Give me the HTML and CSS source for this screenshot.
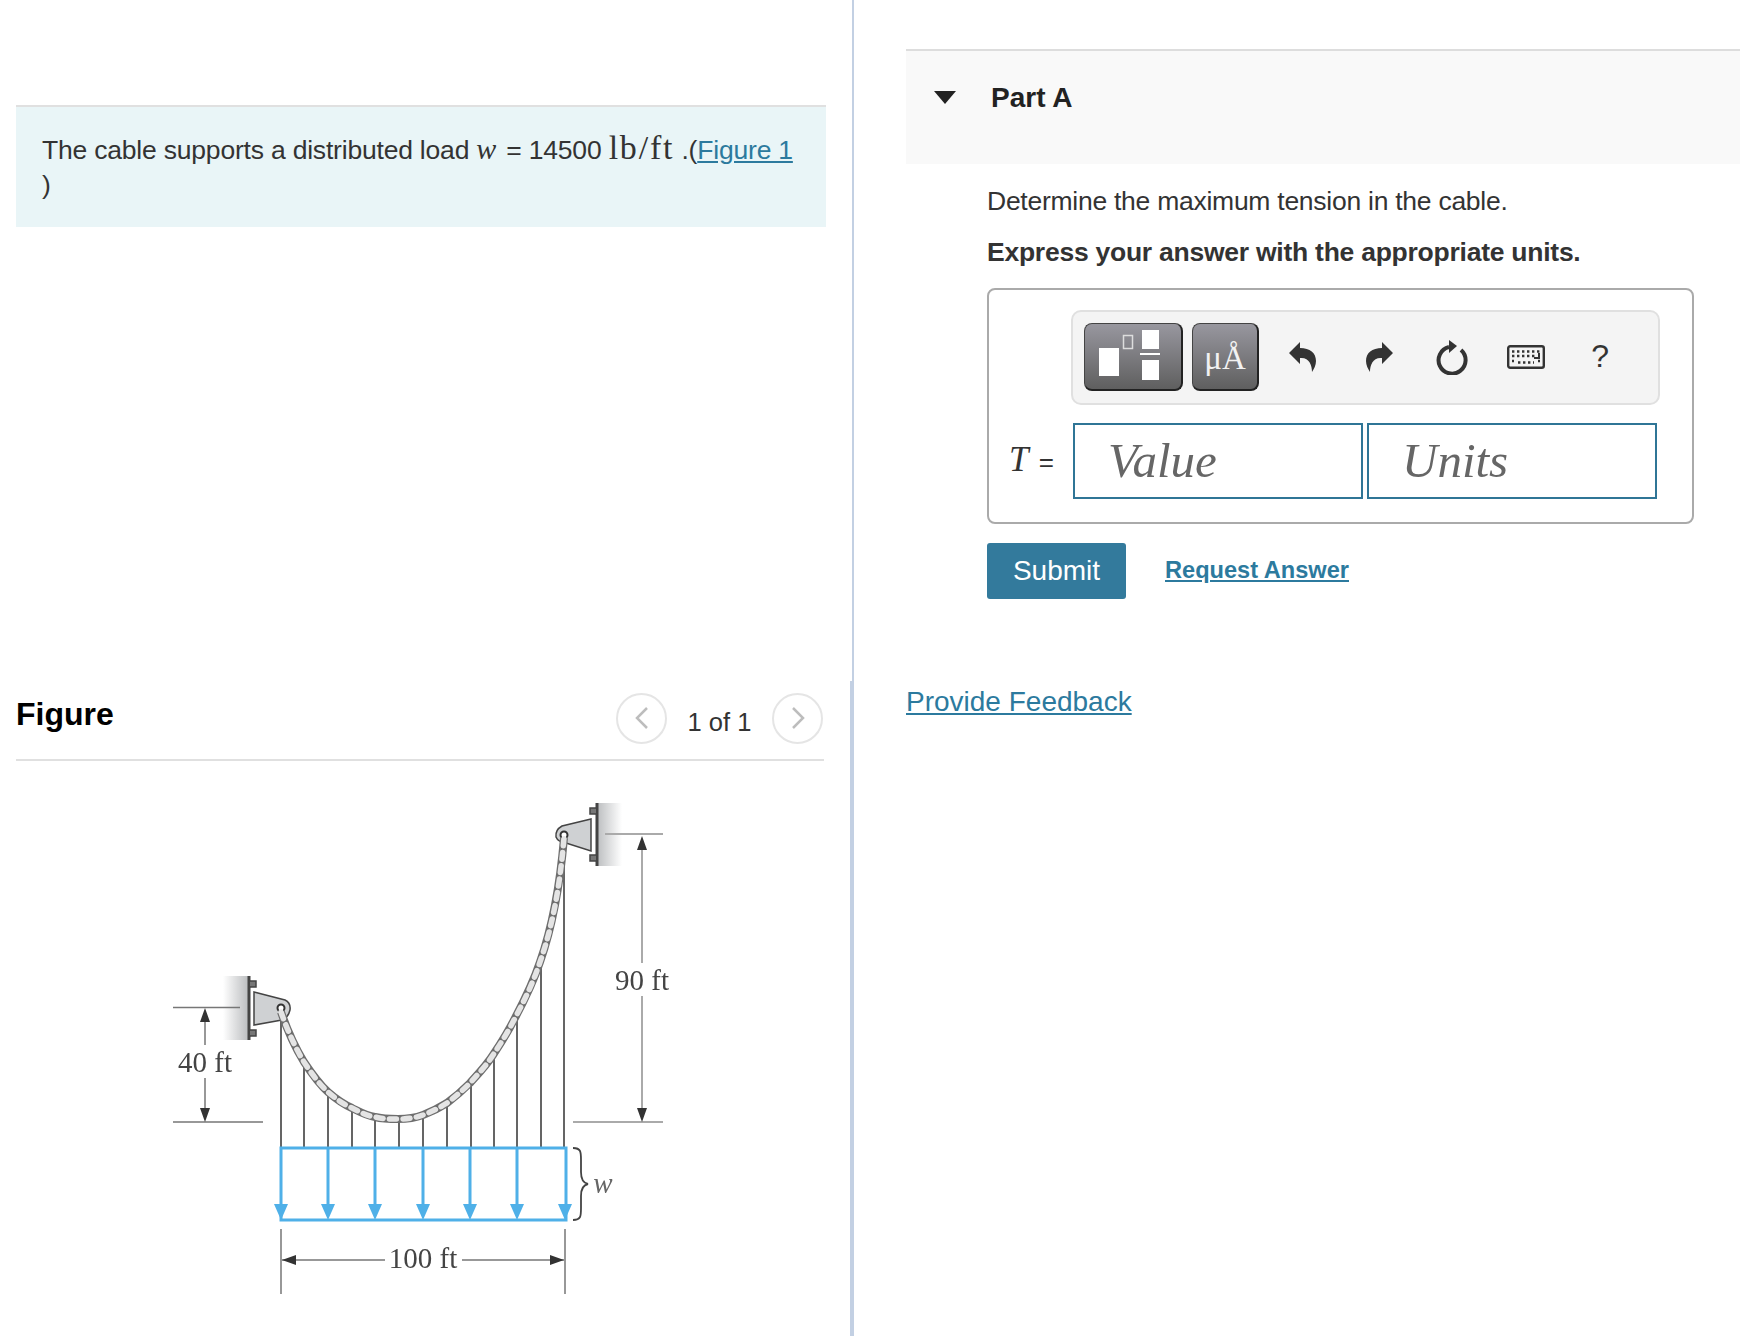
FILE: index.html
```html
<!DOCTYPE html>
<html lang="en">
<head>
<meta charset="utf-8">
<title>Part A</title>
<link rel="stylesheet" href="styles.css">
</head>
<body>
<div class="page">
  <section class="left">
    <div class="left-top">
      <div class="intro">The cable supports a distributed load <i class="math">w</i> = 14500 <span class="unit">lb/ft</span> .(<a href="#">Figure 1</a><br>)</div>
    </div>
    <div class="left-bottom">
      <div class="fig-head">
        <h2>Figure</h2>
        <div class="pager">
          <span class="circle"><svg width="16" height="24" viewBox="0 0 16 24"><path class="chev" d="M13 2 3 12l10 10"/></svg></span>
          <span class="count">1 of 1</span>
          <span class="circle"><svg width="16" height="24" viewBox="0 0 16 24"><path class="chev" d="m3 2 10 10L3 22"/></svg></span>
        </div>
      </div>
      <svg class="figure" width="810" height="575" viewBox="16 761 810 575">
        <defs>
          <linearGradient id="wl" x1="0" x2="1" y1="0" y2="0"><stop offset="0" stop-color="#fff"/><stop offset="1" stop-color="#bcbec0"/></linearGradient>
          <linearGradient id="wr" x1="0" x2="1" y1="0" y2="0"><stop offset="0" stop-color="#bcbec0"/><stop offset="1" stop-color="#fff"/></linearGradient>
          <path id="cable" d="M281 1012C288 1032 296 1049 304 1062 312 1074 319 1084 328 1092 336 1099 343 1104 352 1108 360 1112 367 1116 375 1117 383 1119 390 1119 398 1119 407 1119 415 1118 423 1115 431 1112 439 1108 447 1103 455 1097 462 1091 470 1083 478 1074 486 1066 493 1055 501 1043 508 1032 515 1018 525 999 533 983 540 962 553 925 560 885 564 838"/>
        </defs>
        <rect x="223" y="976" width="25" height="64" fill="url(#wl)"/>
        <rect x="597" y="803" width="25" height="63" fill="url(#wr)"/>
        <g class="hang">
          <path d="M281 1012V1148M304 1062V1148M328 1092V1148M352 1108V1148M375 1117V1148M399 1119V1148M423 1115V1148M447 1103V1148M471 1083V1148M494 1055V1148M517 1018V1148M541 962V1148M564 838V1148"/>
        </g>
        <path class="bracket" d="M254 992 285 1000Q291 1003 290 1010 288 1018 282 1020L254 1025Z"/>
        <path class="bracket" d="M591 819 562 826Q555 830 556 837 558 842 566 843L591 851Z"/>
        <path class="plate" d="M249 976V1040M597 803V866"/>
        <path class="tabs" d="M250 981H256V987H250M250 1030H256V1036H250M596 808H590V814H596M596 855H590V861H596"/>
        <circle class="eye" cx="281" cy="1008" r="3.500"/>
        <circle class="eye" cx="564" cy="835" r="3.500"/>
        <use class="r1" href="#cable"/>
        <use class="r2" href="#cable"/>
        <g class="dim">
          <path d="M173 1007.500H240M173 1122H263M205 1022V1045M205 1078V1108"/>
          <path d="M282 1260H385M462 1260H564M281 1229V1294M565 1229V1294"/>
        </g>
        <g class="dim light">
          <path d="M605 834H663M573 1122H663M642 848V963M642 996V1108"/>
        </g>
        <path class="head" d="M205 1008 210 1022H200ZM205 1122 200 1108H210ZM282 1260 296 1255V1265ZM564 1260 550 1255V1265ZM642 836 647 850H637ZM642 1122 637 1108H647Z"/>
        <g class="load">
          <path d="M281 1148H566V1220H281ZM328 1148V1210M375 1148V1210M423 1148V1210M470 1148V1210M517 1148V1210"/>
        </g>
        <path class="load-head" d="M274 1204H288L281 1220ZM321 1204H335L328 1220ZM368 1204H382L375 1220ZM416 1204H430L423 1220ZM463 1204H477L470 1220ZM510 1204H524L517 1220ZM558 1204H572L565 1220Z"/>
        <path class="brace" d="M573 1148C581 1148 581 1152 581 1160V1172C581 1178 583 1183 588 1184C583 1185 581 1190 581 1196V1208C581 1216 581 1220 573 1220"/>
        <text class="ft" x="205" y="1072">40 ft</text>
        <text class="ft" x="642" y="990">90 ft</text>
        <text class="ft" x="423" y="1268">100 ft</text>
        <text class="ft w" x="603" y="1193">w</text>
      </svg>
    </div>
  </section>
  <section class="right">
    <header class="part-head">
      <svg class="caret" width="22" height="13" viewBox="0 0 22 13"><path d="M0 0H22L11 13Z"/></svg>
      <h1>Part A</h1>
    </header>
    <div class="part-body">
      <p class="q">Determine the maximum tension in the cable.</p>
      <p class="q strong">Express your answer with the appropriate units.</p>
      <div class="answer">
        <div class="toolbar">
          <span class="tbtn wide">
            <svg width="99" height="68" viewBox="0 0 99 68">
              <path class="wh" d="M15 26H35V54H15ZM58 8H75V27H58ZM56 31H76V33H56ZM58 38H75V58H58Z"/>
              <rect class="wo" x="39.500" y="13.500" width="9" height="13"/>
            </svg>
          </span>
          <span class="tbtn unitbtn"><span class="mu">μ</span>Å</span>
          <span class="tool first">
            <svg width="28" height="32" viewBox="0 0 28 32"><path class="ico" d="M0 12 11 1V7C21 7 27 12 27 20 27 24 25 28 23 31 23 24 20 16 11 17V23Z"/></svg>
          </span>
          <span class="tool redo">
            <svg width="28" height="32" viewBox="0 0 28 32"><path class="ico" d="M27 12 16 1V7C6 7 0 12 0 20 0 24 2 28 4 31 4 24 7 16 16 17V23Z"/></svg>
          </span>
          <span class="tool reload">
            <svg width="34" height="36" viewBox="0 0 34 36"><path class="ring" d="M15 8A13.500 13.500 0 1 0 27 11"/><path class="ico" d="M15 1 23 7 15 14Z"/></svg>
          </span>
          <span class="tool">
            <svg width="38" height="24" viewBox="0 0 38 24">
              <rect class="kb" x="1.200" y="1.200" width="35.600" height="21.600" rx="2"/>
              <path class="keys" d="M5 6.500H33M5 11H28M5 16H7M11 17.500H27M31 16H33"/>
              <path class="kb-l" d="M32 8V13H27"/>
            </svg>
          </span>
          <span class="tool help">?</span>
        </div>
        <div class="entry">
          <span class="var"><i>T</i><span class="eq"> =</span></span>
          <span class="field">Value</span>
          <span class="field">Units</span>
        </div>
      </div>
      <div class="actions">
        <button class="submit" type="button">Submit</button>
        <a class="req" href="#">Request Answer</a>
      </div>
    </div>
    <a class="feedback" href="#">Provide Feedback</a>
  </section>
</div>
</body>
</html>
```

FILE: styles.css
```css
* { box-sizing: border-box; }
html, body { margin: 0; height: 100%; background: #fff; }
body { font-family: "Liberation Sans", Arial, sans-serif; color: #333; overflow: hidden; }
a { color: #2c7a9e; }
.page { display: flex; width: 1740px; height: 1336px; }

.left { width: 854px; display: flex; flex-direction: column; flex: none; }
.left-top { height: 681px; padding: 105px 0 0 16px; border-right: 2px solid #c3d0e3; }
.intro {
  width: 810px; height: 122px; padding: 23px 0 0 26px;
  background: #e9f5f7; border-top: 2px solid #e0e0e0;
  font-size: 26.500px; line-height: 35px; letter-spacing: -.2px;
}
.math { font-family: "Liberation Serif", serif; font-size: 30px; margin-right: 3px; }
.unit { font-family: "Liberation Serif", serif; font-size: 34px; letter-spacing: 1.800px; }

.left-bottom { flex: 1; padding-left: 16px; border-right: 4px solid #c3d0e3; }
.fig-head {
  width: 808px; height: 80px; display: flex; align-items: center; justify-content: space-between;
  border-bottom: 2px solid #e0e0e0; padding-bottom: 4px;
}
.fig-head h2 { margin: 0 0 8px; font-size: 32px; color: #000; font-weight: 700; }
.pager { display: flex; align-items: center; margin-right: 1px; }
.circle {
  width: 51px; height: 51px; border-radius: 50%; border: 2px solid #e5e5e5;
  display: flex; align-items: center; justify-content: center;
}
.chev { fill: none; stroke: #bdbdbd; stroke-width: 2.500; }
.count { width: 105px; text-align: center; font-size: 25.500px; padding-top: 9px; }
.figure { display: block; filter: blur(.6px); }

.hang path { fill: none; stroke: #555; stroke-width: 1.800; }
.bracket { fill: #cfd1d3; stroke: #444; stroke-width: 1.500; }
.plate { fill: none; stroke: #444; stroke-width: 3; }
.tabs { fill: #777; stroke: #444; stroke-width: 1.500; }
.eye { fill: #fff; stroke: #333; stroke-width: 2; }
.r1 { fill: none; stroke: #6e6e6e; stroke-width: 8; }
.r2 { fill: none; stroke: #e4e4e4; stroke-width: 5.500; stroke-linecap: round; stroke-dasharray: 7 6.500; }
.dim path { fill: none; stroke: #777; stroke-width: 1.500; }
.dim.light path { stroke: #aaa; stroke-width: 2; }
.head { fill: #333; }
.load path { fill: none; stroke: #4fb0e8; stroke-width: 3; }
.load-head { fill: #4fb0e8; }
.brace { fill: none; stroke: #444; stroke-width: 1.800; }
.ft { font-family: "Liberation Serif", serif; font-size: 29px; fill: #444; text-anchor: middle; }
.ft.w { font-style: italic; fill: #666; }

.right { flex: 1; padding: 49px 0 0 52px; }
.part-head {
  height: 115px; display: flex; align-items: flex-start;
  background: #f9f9f9; border-top: 2px solid #dddddd; padding: 30px 0 0 28px;
}
.caret { margin-top: 10px; fill: #222; }
.part-head h1 { margin: 0 0 0 35px; font-size: 28px; line-height: 34px; color: #222; font-weight: 700; }
.part-body { padding: 19px 0 0 81px; }
.q { margin: 0; font-size: 26.500px; line-height: 36px; letter-spacing: -.26px; }
.q.strong { margin-top: 15px; font-weight: 700; letter-spacing: -.25px; }
.answer {
  width: 707px; height: 236px; margin-top: 18px; padding: 20px 0 0 82px;
  border: 2px solid #aaa; border-radius: 8px;
}
.toolbar {
  width: 589px; height: 95px; display: flex; align-items: center; padding: 0 0 2px 11px;
  background: #f4f4f4; border: 2px solid #e0e0e0; border-radius: 10px;
}
.tbtn {
  height: 68px; display: flex; align-items: center; justify-content: center; flex: none;
  background: linear-gradient(#98979f, #5f5f5f); border: 1px solid #444; border-bottom: 2px solid #222; border-right: 2px solid #222;
  border-radius: 8px; color: #fff;
}
.tbtn.wide { width: 99px; margin-right: 9px; }
.tbtn.wide svg { margin: -1px; flex: none; }
.wh { fill: #fff; }
.wo { fill: none; stroke: #ddd; stroke-width: 1.500; }
.unitbtn { width: 67px; font-family: "Liberation Serif", serif; font-size: 33px; padding-top: 4px; color: #f2f2f2; }
.mu { font-size: 33px; }
.tool { width: 74.500px; display: flex; justify-content: center; align-items: center; flex: none; }
.tool.first { margin-left: 7px; }
.tool.redo { margin-left: 2px; }
.tool.reload { margin-left: -3px; }
.ico { fill: #333; }
.ring { fill: none; stroke: #333; stroke-width: 4; }
.kb { fill: #f4f4f4; stroke: #333; stroke-width: 2.400; }
.keys { fill: none; stroke: #333; stroke-width: 2.400; stroke-dasharray: 2.400 2.600; }
.kb-l { fill: none; stroke: #333; stroke-width: 2; }
.help { font-size: 32px; color: #333; }
.entry { display: flex; align-items: stretch; gap: 4px; margin: 18px 0 0 2px; position: relative; }
.var {
  position: absolute; left: -64px; top: 17px; white-space: nowrap;
  font-family: "Liberation Serif", serif; font-size: 35px;
}
.eq { font-family: "Liberation Sans", sans-serif; font-size: 26px; margin-left: 3px; }
.field {
  width: 290px; height: 76px; padding: 0 0 2px 33px; display: flex; align-items: center;
  border: 2px solid #2f7596; background: #fff;
  font-family: "Liberation Serif", serif; font-style: italic; font-size: 49px; color: #666;
}
.actions { display: flex; align-items: center; margin-top: 19px; }
.submit {
  width: 139px; height: 56px; border: 0; border-radius: 3px; background: #337a9c; color: #fff;
  font-family: "Liberation Sans", sans-serif; font-size: 28px; padding: 0;
}
.req { margin: 0 0 2px 39px; font-size: 23.600px; font-weight: 700; }
.feedback { display: block; margin-top: 85px; font-size: 28px; line-height: 36px; }
```
